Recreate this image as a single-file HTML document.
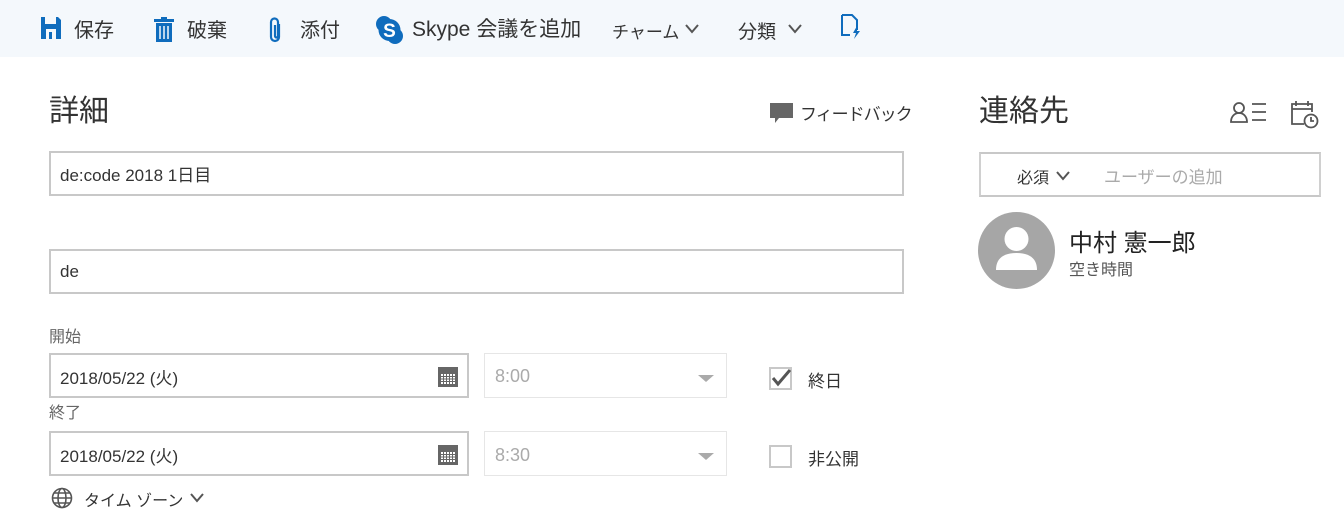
<!DOCTYPE html>
<html><head><meta charset="utf-8"><style>
*{margin:0;padding:0;box-sizing:border-box}
body{width:1344px;height:522px;background:#fff;font-family:"Liberation Sans","Noto Sans CJK JP",sans-serif;color:#333;position:relative;overflow:hidden}
.a{position:absolute;white-space:nowrap}
.tb{position:absolute;left:0;top:0;width:1344px;height:57px;background:#f4f8fc}
.tt{font-size:20px;color:#333;top:14px}
.inp{position:absolute;border:2px solid #c8c8c8;background:#fff}
.inp span{position:absolute;left:9px;font-size:17px;color:#333}
.tm{position:absolute;border:1px solid #e6e6e6;background:#fff}
.tm span{position:absolute;left:10px;top:11px;font-size:18px;color:#aaa}
.tri{position:absolute;right:12px;top:21px;width:0;height:0;border-left:8px solid transparent;border-right:8px solid transparent;border-top:7px solid #aaa}
</style></head><body>
<div class="tb"></div>
<svg class="a" style="left:41px;top:17px" width="20" height="22" viewBox="0 0 20 22"><path d="M0 0H17L20 3V22H0Z" fill="#0f6cbd"/><rect x="4" y="0" width="11" height="7" fill="#f4f8fc"/><rect x="5" y="12" width="10" height="10" fill="#f4f8fc"/><rect x="8" y="15" width="3" height="7" fill="#0f6cbd"/></svg>
<div class="a tt" style="left:74px">保存</div>
<svg class="a" style="left:154px;top:17px" width="20" height="25" viewBox="0 0 20 25"><rect x="0" y="2" width="20" height="3" fill="#0f6cbd"/><rect x="7" y="0" width="6" height="3" fill="#0f6cbd"/><path d="M2 6H18V25H2Z" fill="#0f6cbd"/><path d="M6 9V22M10 9V22M14 9V22" stroke="#f4f8fc" stroke-width="1.5"/></svg>
<div class="a tt" style="left:187px">破棄</div>
<svg class="a" style="left:268px;top:17px" width="16" height="27" viewBox="0 0 16 27"><path d="M11 7V20A4 4 0 0 1 3 20V5A3.5 3.5 0 0 1 10 5V19A1.5 1.5 0 0 1 7 19V8" fill="none" stroke="#0f6cbd" stroke-width="2.2"/></svg>
<div class="a tt" style="left:300px">添付</div>
<svg class="a" style="left:376px;top:16px" width="27" height="28" viewBox="0 0 27 28"><circle cx="8" cy="8" r="8" fill="#0f6cbd"/><circle cx="19" cy="20" r="8" fill="#0f6cbd"/><circle cx="13.5" cy="14" r="11" fill="#0f6cbd"/><text x="13.5" y="21" font-size="19" font-weight="bold" fill="#fff" text-anchor="middle" font-family="Liberation Sans">S</text></svg>
<div class="a tt" style="left:412px;font-size:21px;top:13px">Skype 会議を追加</div>
<div class="a" style="left:612px;top:18px;font-size:17px">チャーム</div>
<svg class="a" style="left:685px;top:24px" width="14" height="10"><path d="M1 1L7 8L13 1" fill="none" stroke="#555" stroke-width="2"/></svg>
<div class="a" style="left:738px;top:17px;font-size:19px">分類</div>
<svg class="a" style="left:788px;top:24px" width="14" height="10"><path d="M1 1L7 8L13 1" fill="none" stroke="#555" stroke-width="2"/></svg>
<svg class="a" style="left:841px;top:14px" width="20" height="26" viewBox="0 0 20 26"><path d="M1 1H11L16 6V16M1 1V21H9" fill="none" stroke="#0f6cbd" stroke-width="2"/><path d="M16 12L12 19H15L13 25L19 17H16Z" fill="#0f6cbd"/></svg>

<div class="a" style="left:49px;top:86px;font-size:30px;color:#333">詳細</div>
<svg class="a" style="left:770px;top:103px" width="24" height="24" viewBox="0 0 24 24"><path d="M0 0H23V15H9L5 20V15H0Z" fill="#666"/></svg>
<div class="a" style="left:800px;top:100px;font-size:17px;color:#333;letter-spacing:-1px">フィードバック</div>

<div class="inp" style="left:49px;top:151px;width:855px;height:45px"><span style="top:8px">de:code 2018 1日目</span></div>
<div class="inp" style="left:49px;top:249px;width:855px;height:45px"><span style="top:11px">de</span></div>

<div class="a" style="left:49px;top:323px;font-size:16px;color:#666">開始</div>
<div class="inp" style="left:49px;top:353px;width:420px;height:45px"><span style="top:9px">2018/05/22 (火)</span>
<svg style="position:absolute;right:9px;top:12px" width="20" height="20"><rect width="20" height="20" fill="#666"/><rect x="3" y="7" width="14" height="10" fill="#fff"/><path d="M5.5 7V17M8.5 7V17M11.5 7V17M14.5 7V17M3 9.5H17M3 12H17M3 14.5H17" stroke="#666" stroke-width="1"/></svg></div>
<div class="tm" style="left:484px;top:353px;width:243px;height:45px"><span style="top:12px">8:00</span><div class="tri"></div></div>
<div class="a" style="left:769px;top:367px;width:23px;height:23px;border:2px solid #c8c8c8"></div>
<svg class="a" style="left:771px;top:367px" width="20" height="20"><path d="M2 11L7 17L19 3" fill="none" stroke="#555" stroke-width="3"/></svg>
<div class="a" style="left:808px;top:367px;font-size:17px">終日</div>

<div class="a" style="left:49px;top:399px;font-size:16px;color:#666">終了</div>
<div class="inp" style="left:49px;top:431px;width:420px;height:45px"><span style="top:9px">2018/05/22 (火)</span>
<svg style="position:absolute;right:9px;top:12px" width="20" height="20"><rect width="20" height="20" fill="#666"/><rect x="3" y="7" width="14" height="10" fill="#fff"/><path d="M5.5 7V17M8.5 7V17M11.5 7V17M14.5 7V17M3 9.5H17M3 12H17M3 14.5H17" stroke="#666" stroke-width="1"/></svg></div>
<div class="tm" style="left:484px;top:431px;width:243px;height:45px"><span style="top:13px">8:30</span><div class="tri"></div></div>
<div class="a" style="left:769px;top:445px;width:23px;height:23px;border:2px solid #c8c8c8"></div>
<div class="a" style="left:808px;top:445px;font-size:17px">非公開</div>

<svg class="a" style="left:51px;top:487px" width="22" height="22" viewBox="0 0 22 22" fill="none" stroke="#555" stroke-width="1.6"><circle cx="11" cy="11" r="9.5"/><ellipse cx="11" cy="11" rx="4" ry="9.5"/><path d="M1.5 11H20.5M3 6H19M3 16H19"/></svg>
<div class="a" style="left:84px;top:487px;font-size:16px">タイム ゾーン</div>
<svg class="a" style="left:190px;top:493px" width="14" height="10"><path d="M1 1L7 8L13 1" fill="none" stroke="#555" stroke-width="2"/></svg>

<div class="a" style="left:979px;top:86px;font-size:30px;color:#333">連絡先</div>
<svg class="a" style="left:1230px;top:101px" width="37" height="22" viewBox="0 0 37 22" fill="none" stroke="#555" stroke-width="1.8"><circle cx="9" cy="7" r="5"/><path d="M1 21C1 15 5 12 9 12S17 15 17 21Z"/><path d="M22 3H36M22 11H36M22 19H36"/></svg>
<svg class="a" style="left:1290px;top:99px" width="29" height="30" viewBox="0 0 29 30" fill="none" stroke="#555" stroke-width="1.8"><path d="M14 25H2V5H22V13"/><path d="M2 10H22M6 2V7M18 2V7"/><circle cx="21" cy="22" r="6.5" fill="#fff"/><path d="M21 18V22H24"/></svg>
<div class="inp" style="left:979px;top:152px;width:342px;height:45px;border-color:#c8c8c8 #d0d0d0"></div>
<div class="a" style="left:1017px;top:164px;font-size:16px">必須</div>
<svg class="a" style="left:1056px;top:171px" width="14" height="10"><path d="M1 1L7 8L13 1" fill="none" stroke="#555" stroke-width="2"/></svg>
<div class="a" style="left:1104px;top:163px;font-size:17px;color:#aaa">ユーザーの追加</div>
<svg class="a" style="left:978px;top:212px" width="77" height="77" viewBox="0 0 77 77"><circle cx="38.5" cy="38.5" r="38.5" fill="#a6a6a6"/><circle cx="38.5" cy="27" r="12" fill="#fff"/><path d="M18 58C18 46 26 41 38.5 41S59 46 59 58Z" fill="#fff"/></svg>
<div class="a" style="left:1069px;top:223px;font-size:24px;color:#222">中村 憲一郎</div>
<div class="a" style="left:1069px;top:256px;font-size:16px;color:#555">空き時間</div>
</body></html>
